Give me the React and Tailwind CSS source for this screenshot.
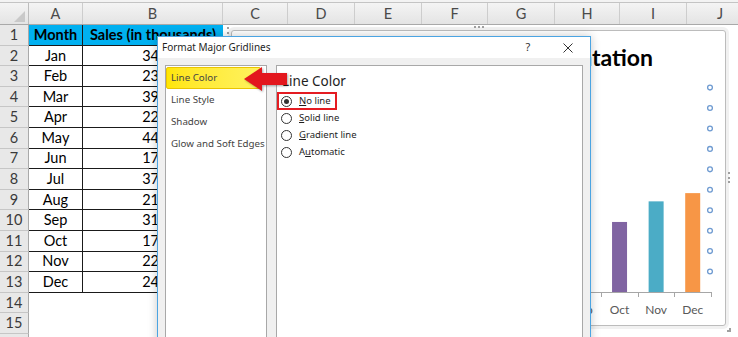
import React from 'react';

const sales = [
  ['Jan', 34], ['Feb', 23], ['Mar', 39], ['Apr', 22], ['May', 44], ['Jun', 17],
  ['Jul', 37], ['Aug', 21], ['Sep', 31], ['Oct', 17], ['Nov', 22], ['Dec', 24],
];

const palette = ['#4f81bd', '#c0504d', '#9bbb59', '#8064a2', '#4bacc6', '#f79646'];

const headers = [
  { label: 'A', className: 'w-[54px]' },
  { label: 'B', className: 'w-[140px]' },
  { label: 'C', className: 'w-[65px]' },
  { label: 'D', className: 'w-[67px]' },
  { label: 'E', className: 'w-[67px]' },
  { label: 'F', className: 'w-[66px]' },
  { label: 'G', className: 'w-[67px]' },
  { label: 'H', className: 'w-[65px]' },
  { label: 'I', className: 'w-[67px]' },
  { label: 'J', className: 'w-[67px]' },
];

export default function App() {
  return (
    <div className="relative h-[337px] w-[738px] overflow-hidden bg-white font-['Lato',sans-serif] text-[14.5px] text-black">
      <div className="h-[3px] border-b border-[#c4c4c4] bg-[#f3f3f3]" />
      <ColumnHeader />
      {Array.from({ length: 16 }, (_, i) => (
        <SheetRow key={i} index={i + 1} />
      ))}
      <Chart />
      <Dialog />
      <svg className="absolute left-[240px] top-[63px] drop-shadow-[1px_1px_1px_rgba(0,0,0,0.35)]" width="52" height="32" viewBox="0 0 52 32">
        <polygon points="4,16 22,4 22,10 47,10 47,22 22,22 22,28" fill="#e3171d" />
      </svg>
    </div>
  );
}

function ColumnHeader() {
  return (
    <div className="flex h-[22px] border-b border-[#a9a9a9] bg-gradient-to-b from-[#f4f4f4] to-[#e4e4e4] text-[#4a4a4a]">
      <div className="relative w-[29px] shrink-0 border-r border-[#bdbdbd]">
        <svg className="absolute left-[14px] top-[8px]" width="11" height="11" viewBox="0 0 11 11">
          <polygon points="11,0 11,11 0,11" fill="#c9c9c9" />
        </svg>
      </div>
      {headers.map(h => (
        <div key={h.label} className={`${h.className} shrink-0 border-r border-[#cdcdcd] text-center leading-[21px]`}>
          {h.label}
        </div>
      ))}
    </div>
  );
}

function SheetRow({ index }) {
  const isHead = index === 1;
  const data = index >= 2 && index <= 13 ? sales[index - 2] : null;
  const inTable = index <= 13;

  return (
    <div className="flex h-[20.6px]">
      <div className="flex w-[29px] shrink-0 items-center justify-center border-r border-b border-r-[#a9a9a9] border-b-[#c6c6c6] bg-[#e8e8e8] text-[#3a3a3a]">
        {index <= 15 ? index : ''}
      </div>
      {inTable && (
        <>
          <div className={`flex w-[54px] shrink-0 items-center justify-center border-r border-b border-[#1a1a1a] ${isHead ? 'bg-[#00b0f0] font-bold' : ''}`}>
            {isHead ? 'Month' : data[0]}
          </div>
          <div className={`flex w-[140px] shrink-0 items-center border-b border-[#1a1a1a] ${isHead ? 'justify-center bg-[#00b0f0] font-bold' : 'justify-end pr-[64px]'}`}>
            {isHead ? 'Sales (in thousands)' : data[1]}
          </div>
        </>
      )}
    </div>
  );
}

function Chart() {
  const left = 40;
  const step = 439 / 12;
  const axis = 221;
  const unit = 4.12;

  return (
    <>
      <div className="absolute left-[231px] top-[30px] flex h-[296px] w-[495px] flex-col rounded-[3px] border border-[#bcbcbc] bg-white shadow-[0_0_0_3px_#f1f1f1]">
        <div className="flex justify-end pr-[72px] pt-[12px] text-[23px] font-bold leading-[28px]">
          Sales Representation
        </div>
        <svg width="493" height="227" viewBox="0 0 493 227" className="block">
          {sales.map(([m, v], i) => (
            <rect key={m} x={left + i * step + (step - 15) / 2} y={axis - v * unit} width="15" height={v * unit} fill={palette[i % 6]} />
          ))}
          <line x1={left} y1={axis + 0.5} x2={left + 439} y2={axis + 0.5} stroke="#a6a6a6" />
          {Array.from({ length: 13 }, (_, i) => (
            <line key={i} x1={Math.round(left + i * step) + 0.5} y1={axis} x2={Math.round(left + i * step) + 0.5} y2={axis + 5} stroke="#a6a6a6" />
          ))}
          {Array.from({ length: 10 }, (_, k) => (
            <circle key={k} cx="478" cy={axis - (k + 1) * 20.44} r="2.4" fill="white" stroke="#6f9bd1" strokeWidth="1.3" />
          ))}
        </svg>
        <div className="ml-[40px] mt-[4px] grid w-[439px] grid-cols-12 text-center text-[12px] leading-[16px] text-[#595959]">
          {sales.map(([m]) => (
            <span key={m}>{m}</span>
          ))}
        </div>
      </div>
      <div className="absolute left-[227px] top-[27px] h-[7px] w-[2px] border-l-2 border-dotted border-[#a0a0a0]" />
      <div className="absolute left-[474px] top-[26px] h-[2px] w-[10px] border-t-2 border-dotted border-[#a0a0a0]" />
      <div className="absolute left-[728px] top-[172px] h-[11px] w-[2px] border-l-2 border-dotted border-[#a0a0a0]" />
      <div className="absolute left-[727px] top-[328px] h-[4px] w-[4px] border-b-2 border-r-2 border-dotted border-[#a0a0a0]" />
    </>
  );
}

function Radio({ checked }) {
  return (
    <span className="flex h-[11px] w-[11px] shrink-0 items-center justify-center rounded-full border border-[#333] bg-white">
      {checked && <span className="h-[5px] w-[5px] rounded-full bg-[#333]" />}
    </span>
  );
}

function Dialog() {
  const options = [
    ['S', 'olid line'],
    ['G', 'radient line'],
  ];

  return (
    <div className="absolute left-[157px] top-[36px] flex h-[320px] w-[434px] flex-col border border-[#4ba4e2] bg-[#f0f0f0] font-['Noto_Sans',sans-serif] text-[#1e1e1e] shadow-[0_0_9px_rgba(0,0,0,0.22)]">
      <div className="flex h-[21px] shrink-0 items-center bg-white pl-[4px] text-[10px]">
        <span className="flex-1">Format Major Gridlines</span>
        <span className="mr-[15px] w-[20px] text-center text-[11px] text-[#333]">?</span>
        <span className="mr-[7px] flex w-[30px] justify-center">
          <svg width="10" height="10" viewBox="0 0 10 10">
            <path d="M0.5 0.5L9.5 9.5M9.5 0.5L0.5 9.5" stroke="#333" strokeWidth="1" />
          </svg>
        </span>
      </div>
      <div className="flex flex-1 gap-[9px] px-[7px] pt-[7px]">
        <div className="w-[102px] border border-[#a8a8a8] bg-white pt-[1px] text-[9.75px] text-[#444]">
          <div className="mr-[5px] flex h-[22px] items-center rounded-[2px] border border-[#eac400] bg-gradient-to-r from-[#ffe600] to-[#fff25c] pl-[4px]">
            Line Color
          </div>
          <div className="flex h-[22px] items-center pl-[5px]">Line Style</div>
          <div className="flex h-[22px] items-center pl-[5px]">Shadow</div>
          <div className="flex h-[22px] items-center pl-[5px]">Glow and Soft Edges</div>
        </div>
        <div className="flex-1 border border-[#a8a8a8] bg-white pt-[6px] text-[9.5px]">
          <div className="pl-[5px] text-[13.5px] leading-[18px]">Line Color</div>
          <div className="mt-[2px] flex h-[18px] w-[60px] items-center gap-[7px] border-2 border-[#e41c22] pl-[2px]">
            <Radio checked />
            <span><span className="underline">N</span>o line</span>
          </div>
          {options.map(([key, rest]) => (
            <div key={key} className="flex h-[17px] items-center gap-[7px] pl-[4px]">
              <Radio />
              <span><span className="underline">{key}</span>{rest}</span>
            </div>
          ))}
          <div className="flex h-[17px] items-center gap-[7px] pl-[4px]">
            <Radio />
            <span>A<span className="underline">u</span>tomatic</span>
          </div>
        </div>
      </div>
    </div>
  );
}
